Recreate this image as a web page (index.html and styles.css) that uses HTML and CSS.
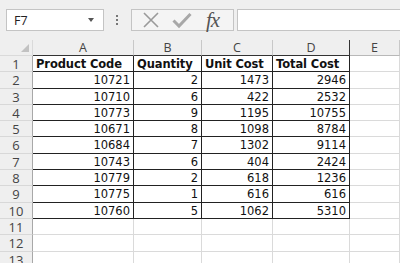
FILE: index.html
```html
<!DOCTYPE html>
<html lang="en">
  <head>
    <meta charset="UTF-8" />
    <meta name="viewport" content="width=device-width, initial-scale=1.0" />
    <title>Sheet</title>
    <link rel="stylesheet" href="styles.css">
  </head>
  <body>
    <div class="toolbar">
      <div class="name-box">
        <span>F7</span>
        <span class="caret"></span>
      </div>
      <div class="dots"><i></i><i></i><i></i></div>
      <div class="icon-box">
        <svg class="icon" width="18" height="18" viewBox="0 0 18 18">
          <path d="M2 2 L16 16 M16 2 L2 16" stroke="#9a9a9a" stroke-width="1.6" fill="none" />
        </svg>
        <svg class="icon" width="20" height="18" viewBox="0 0 20 18">
          <path d="M1.5 9.5 L7 15 L18.5 3" stroke="#a8a8a8" stroke-width="3" fill="none" />
        </svg>
        <span class="fx">fx</span>
      </div>
      <div class="formula"></div>
    </div>

    <div class="sheet">
      <div class="corner"><span class="tri"></span></div>
      <div class="col-head top">A</div>
      <div class="col-head top">B</div>
      <div class="col-head top">C</div>
      <div class="col-head top">D</div>
      <div class="col-head">E</div>

      <div class="row-head">1</div>
      <div class="cell t bold">Product Code</div>
      <div class="cell t bold">Quantity</div>
      <div class="cell t bold">Unit Cost</div>
      <div class="cell t bold">Total Cost</div>
      <div class="cell"></div>

      <div class="row-head">2</div>
      <div class="cell t num">10721</div>
      <div class="cell t num">2</div>
      <div class="cell t num">1473</div>
      <div class="cell t num">2946</div>
      <div class="cell"></div>

      <div class="row-head">3</div>
      <div class="cell t num">10710</div>
      <div class="cell t num">6</div>
      <div class="cell t num">422</div>
      <div class="cell t num">2532</div>
      <div class="cell"></div>

      <div class="row-head">4</div>
      <div class="cell t num">10773</div>
      <div class="cell t num">9</div>
      <div class="cell t num">1195</div>
      <div class="cell t num">10755</div>
      <div class="cell"></div>

      <div class="row-head">5</div>
      <div class="cell t num">10671</div>
      <div class="cell t num">8</div>
      <div class="cell t num">1098</div>
      <div class="cell t num">8784</div>
      <div class="cell"></div>

      <div class="row-head">6</div>
      <div class="cell t num">10684</div>
      <div class="cell t num">7</div>
      <div class="cell t num">1302</div>
      <div class="cell t num">9114</div>
      <div class="cell"></div>

      <div class="row-head">7</div>
      <div class="cell t num">10743</div>
      <div class="cell t num">6</div>
      <div class="cell t num">404</div>
      <div class="cell t num">2424</div>
      <div class="cell"></div>

      <div class="row-head">8</div>
      <div class="cell t num">10779</div>
      <div class="cell t num">2</div>
      <div class="cell t num">618</div>
      <div class="cell t num">1236</div>
      <div class="cell"></div>

      <div class="row-head">9</div>
      <div class="cell t num">10775</div>
      <div class="cell t num">1</div>
      <div class="cell t num">616</div>
      <div class="cell t num">616</div>
      <div class="cell"></div>

      <div class="row-head">10</div>
      <div class="cell t num">10760</div>
      <div class="cell t num">5</div>
      <div class="cell t num">1062</div>
      <div class="cell t num">5310</div>
      <div class="cell"></div>

      <div class="row-head">11</div>
      <div class="cell"></div>
      <div class="cell"></div>
      <div class="cell"></div>
      <div class="cell"></div>
      <div class="cell"></div>

      <div class="row-head">12</div>
      <div class="cell"></div>
      <div class="cell"></div>
      <div class="cell"></div>
      <div class="cell"></div>
      <div class="cell"></div>

      <div class="row-head">13</div>
      <div class="cell"></div>
      <div class="cell"></div>
      <div class="cell"></div>
      <div class="cell"></div>
      <div class="cell"></div>
    </div>
  </body>
</html>
```

FILE: styles.css
```css
body {
  margin: 0;
  width: 400px;
  height: 263px;
  overflow: hidden;
  background-color: #fff;
  font-family: "Open Sans", "Liberation Sans", sans-serif;
}
.toolbar {
  display: flex;
  align-items: center;
  height: 40px;
  padding: 0 0 0 6px;
  box-sizing: border-box;
  background-color: #efefef;
}
.name-box {
  display: flex;
  align-items: center;
  justify-content: space-between;
  width: 98px;
  height: 22px;
  padding: 0 9px 0 7px;
  box-sizing: border-box;
  background-color: #fff;
  border: 1px solid #c4c4c4;
  font-size: 12.5px;
  color: #222;
}
.caret {
  width: 0;
  height: 0;
  border-left: 3px solid transparent;
  border-right: 3px solid transparent;
  border-top: 4px solid #555;
}
.dots {
  display: flex;
  flex-direction: column;
  gap: 2px;
  margin: 0 13px 0 12px;
}
.dots i {
  width: 2px;
  height: 2px;
  background-color: #777;
}
.icon-box {
  display: flex;
  align-items: center;
  width: 103px;
  height: 22px;
  padding: 0 0 0 10px;
  box-sizing: border-box;
  background-color: #f4f4f4;
  border: 1px solid #c4c4c4;
}
.icon {
  display: block;
}
.icon + .icon {
  margin-left: 12px;
}
.fx {
  margin-left: 14px;
  font-family: "Liberation Serif", serif;
  font-style: italic;
  font-size: 21px;
  line-height: 20px;
  color: #555;
  letter-spacing: -1px;
}
.formula {
  flex: 1;
  height: 22px;
  margin-left: 3px;
  box-sizing: border-box;
  background-color: #fff;
  border: 1px solid #c4c4c4;
  border-right: none;
}
.sheet {
  display: grid;
  grid-template-columns: 33px 101px 68px 71px 77px 50px;
  grid-template-rows: 16px;
  grid-auto-rows: 16.3px;
}
.sheet > div {
  box-sizing: border-box;
  border-right: 1px solid #dadada;
  border-bottom: 1px solid #dadada;
  overflow: hidden;
  white-space: nowrap;
}
.corner {
  position: relative;
  background-color: #efefef;
}
.corner .tri {
  position: absolute;
  right: 3px;
  bottom: 3px;
  width: 0;
  height: 0;
  border-left: 8px solid transparent;
  border-bottom: 8px solid #c2c2c2;
}
.sheet > .col-head {
  background-color: #efefef;
  border-right-color: #c8c8c8;
  border-bottom-color: #b8b8b8;
  text-align: center;
  font-size: 12.5px;
  line-height: 16px;
  color: #444;
}
.sheet > .col-head.top {
  border-bottom-color: #333;
}
.sheet > .col-head.top:nth-child(5) {
  border-right-color: #333;
}
.sheet > .row-head {
  background-color: #efefef;
  border-right-color: #a8a8a8;
  border-bottom-color: #d8d8d8;
  text-align: center;
  font-size: 13px;
  line-height: 16px;
  color: #444;
}
.sheet > .cell.t {
  border-right-color: #222;
  border-bottom-color: #222;
}
.cell {
  font-family: "DejaVu Sans", Verdana, sans-serif;
  color: #111;
}
.bold {
  padding-left: 3px;
  font-weight: bold;
  font-size: 11.5px;
  line-height: 16px;
  letter-spacing: -0.1px;
}
.num {
  padding-right: 3px;
  text-align: right;
  font-size: 11.5px;
  line-height: 16px;
}
```
